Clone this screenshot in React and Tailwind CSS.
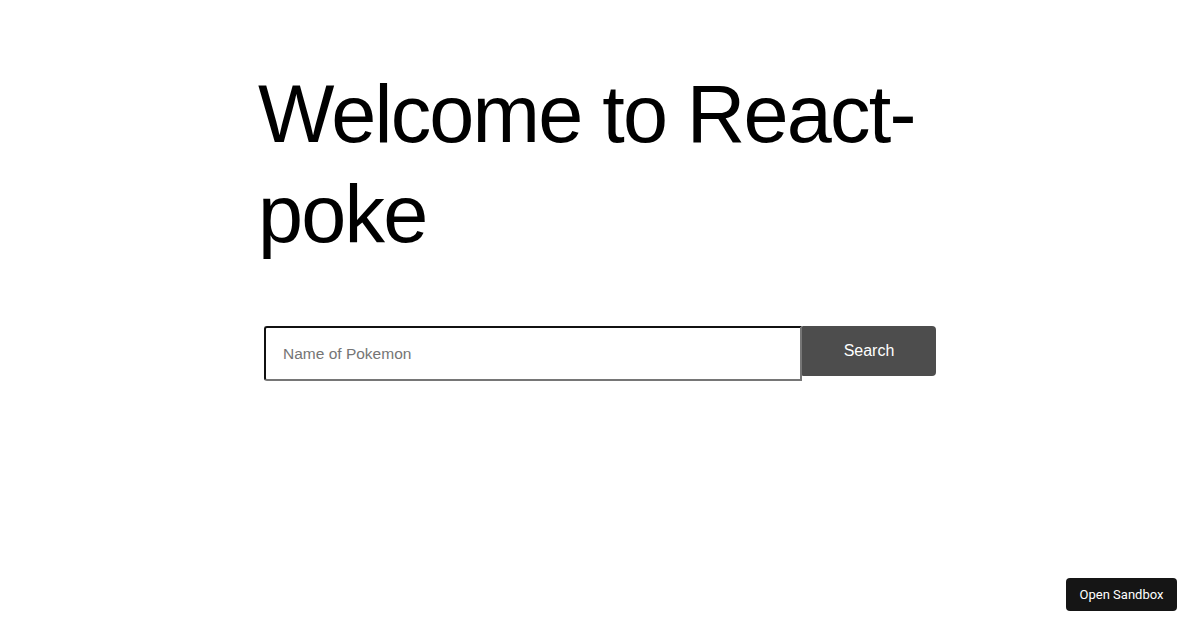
export default function App() {
  return (
    <div className="relative w-[1200px] h-[630px] bg-white overflow-hidden" style={{ fontFamily: '"Liberation Sans", Arial, sans-serif' }}>
      <div className="w-[684px] mx-auto pt-[64px]">
        <h1 className="text-[81px] leading-[100px] font-normal text-black tracking-[-1.8px]">
          Welcome to React-poke
        </h1>
        <div className="flex items-start mt-[62px] ml-[6px]">
          <input
            type="text"
            placeholder="Name of Pokemon"
            className="w-[538px] h-[55px] px-[17px] pt-[1px] text-[15.5px] text-black bg-white border-2 border-t-[#111] border-l-[#111] border-b-[#767676] border-r-[#767676] rounded-l-[3px] outline-none placeholder:text-[#757575]"
          />
          <button className="w-[134px] h-[50px] bg-[#4d4d4d] text-white text-[16px] rounded-r-[4px] rounded-l-[1px]">
            Search
          </button>
        </div>
      </div>
      <button className="absolute left-[1066px] top-[578px] w-[111px] h-[33px] bg-[#151515] text-white text-[13px] rounded-[4px]" style={{ fontFamily: 'Roboto, "Liberation Sans", sans-serif' }}>
        Open Sandbox
      </button>
    </div>
  );
}
